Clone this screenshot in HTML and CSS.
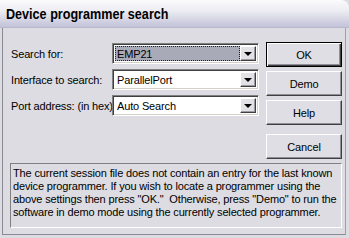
FILE: index.html
```html
<!DOCTYPE html>
<html>
<head>
<meta charset="utf-8">
<link rel="stylesheet" href="styles.css">
</head>
<body>
<div class="window">
  <div class="titlebar"><span class="title">Device programmer search</span></div>
  <div class="frame">
    <div class="top">
      <div class="form">
        <div class="row">
          <span class="label">Search for:</span>
          <div class="combo focused">
            <span class="value"><span class="sel">EMP21</span></span>
            <span class="drop"><span class="tri"></span></span>
          </div>
        </div>
        <div class="row">
          <span class="label">Interface to search:</span>
          <div class="combo">
            <span class="value">ParallelPort</span>
            <span class="drop"><span class="tri"></span></span>
          </div>
        </div>
        <div class="row">
          <span class="label">Port address: (in hex)</span>
          <div class="combo">
            <span class="value">Auto Search</span>
            <span class="drop"><span class="tri"></span></span>
          </div>
        </div>
      </div>
      <div class="buttons">
        <button class="btn default">OK</button>
        <button class="btn">Demo</button>
        <button class="btn">Help</button>
        <button class="btn cancel">Cancel</button>
      </div>
    </div>
    <div class="message">The current session file does not contain an entry for the last known device programmer. If you wish to locate a programmer using the above settings then press "OK."&nbsp; Otherwise, press "Demo" to run the software in demo mode using the currently selected programmer.</div>
  </div>
</div>
</body>
</html>
```

FILE: styles.css
```css
* { box-sizing: border-box; }
html, body { margin: 0; padding: 0; }
body {
  width: 349px;
  height: 238px;
  overflow: hidden;
  background: #e4e4e8;
  font-family: "Liberation Sans", Arial, sans-serif;
  font-size: 11px;
  letter-spacing: -0.15px;
  color: #000;
}
.window {
  width: 349px;
  height: 238px;
  display: flex;
  flex-direction: column;
  background: #dcdce2;
}
.titlebar {
  height: 28px;
  flex: none;
  padding: 5px 0 0 6px;
  color: #000;
  background: linear-gradient(to bottom, #fbfbfd 0%, #ececf2 40%, #c2c2da 100%);
  border-top-right-radius: 8px;
  border-bottom: 1px solid #b8b8c8;
}
.title {
  display: inline-block;
  font-weight: bold;
  font-size: 15px;
  letter-spacing: 0;
  transform: scaleX(0.84);
  transform-origin: left center;
  white-space: nowrap;
}
.frame {
  flex: 1;
  margin: 0 3px 3px 2px;
  border-left: 1px solid #8a8a92;
  border-right: 1px solid #a0a0a8;
  border-bottom: 1px solid #8a8a92;
  padding: 14px 3px 0 7px;
  display: flex;
  flex-direction: column;
}
.top {
  display: flex;
  justify-content: space-between;
}
.form {
  display: flex;
  flex-direction: column;
  gap: 5px;
  padding-top: 1px;
}
.row {
  display: flex;
  align-items: center;
  height: 21px;
}
.label {
  width: 102px;
  padding-left: 1px;
  white-space: nowrap;
}
.combo {
  width: 147px;
  height: 21px;
  display: flex;
  background: #fff;
  border-top: 1px solid #808080;
  border-left: 1px solid #808080;
  border-right: 1px solid #fff;
  border-bottom: 1px solid #fff;
  box-shadow: inset 1px 1px 0 #404040, inset -1px -1px 0 #d4d0c8;
  padding: 2px;
}
.value {
  flex: 1;
  display: flex;
  align-items: center;
  padding-left: 2px;
}
.focused .value {
  background: #a8aab8;
  outline: 1px dotted #202020;
  outline-offset: -1px;
}
.drop {
  width: 16px;
  flex: none;
  background: #e2e2e6;
  border-top: 1px solid #fff;
  border-left: 1px solid #fff;
  border-right: 1px solid #404040;
  border-bottom: 1px solid #404040;
  box-shadow: inset -1px -1px 0 #9a9aa0;
  display: flex;
  align-items: center;
  justify-content: center;
}
.tri {
  width: 0;
  height: 0;
  border-left: 4px solid transparent;
  border-right: 4px solid transparent;
  border-top: 4px solid #000;
  margin-top: 1px;
}
.buttons {
  display: flex;
  flex-direction: column;
  gap: 4px;
  width: 76px;
}
.btn {
  height: 25px;
  font: inherit;
  letter-spacing: inherit;
  color: #000;
  background: #dedee4;
  border-top: 1px solid #fff;
  border-left: 1px solid #fff;
  border-right: 1px solid #404040;
  border-bottom: 1px solid #404040;
  box-shadow: inset -1px -1px 0 #8e8e96;
  padding: 0;
}
.btn.default {
  border: 1px solid #000;
  box-shadow: inset 1px 1px 0 #fff, inset -1px -1px 0 #404040, inset -2px -2px 0 #8e8e96;
}
.btn.cancel { margin-top: 5px; }
.message {
  margin-top: 4px;
  height: 65px;
  border-top: 1px solid #808080;
  border-left: 1px solid #808080;
  border-right: 1px solid #fff;
  border-bottom: 1px solid #fff;
  padding: 3px 2px 0 2px;
  line-height: 13px;
}
```
